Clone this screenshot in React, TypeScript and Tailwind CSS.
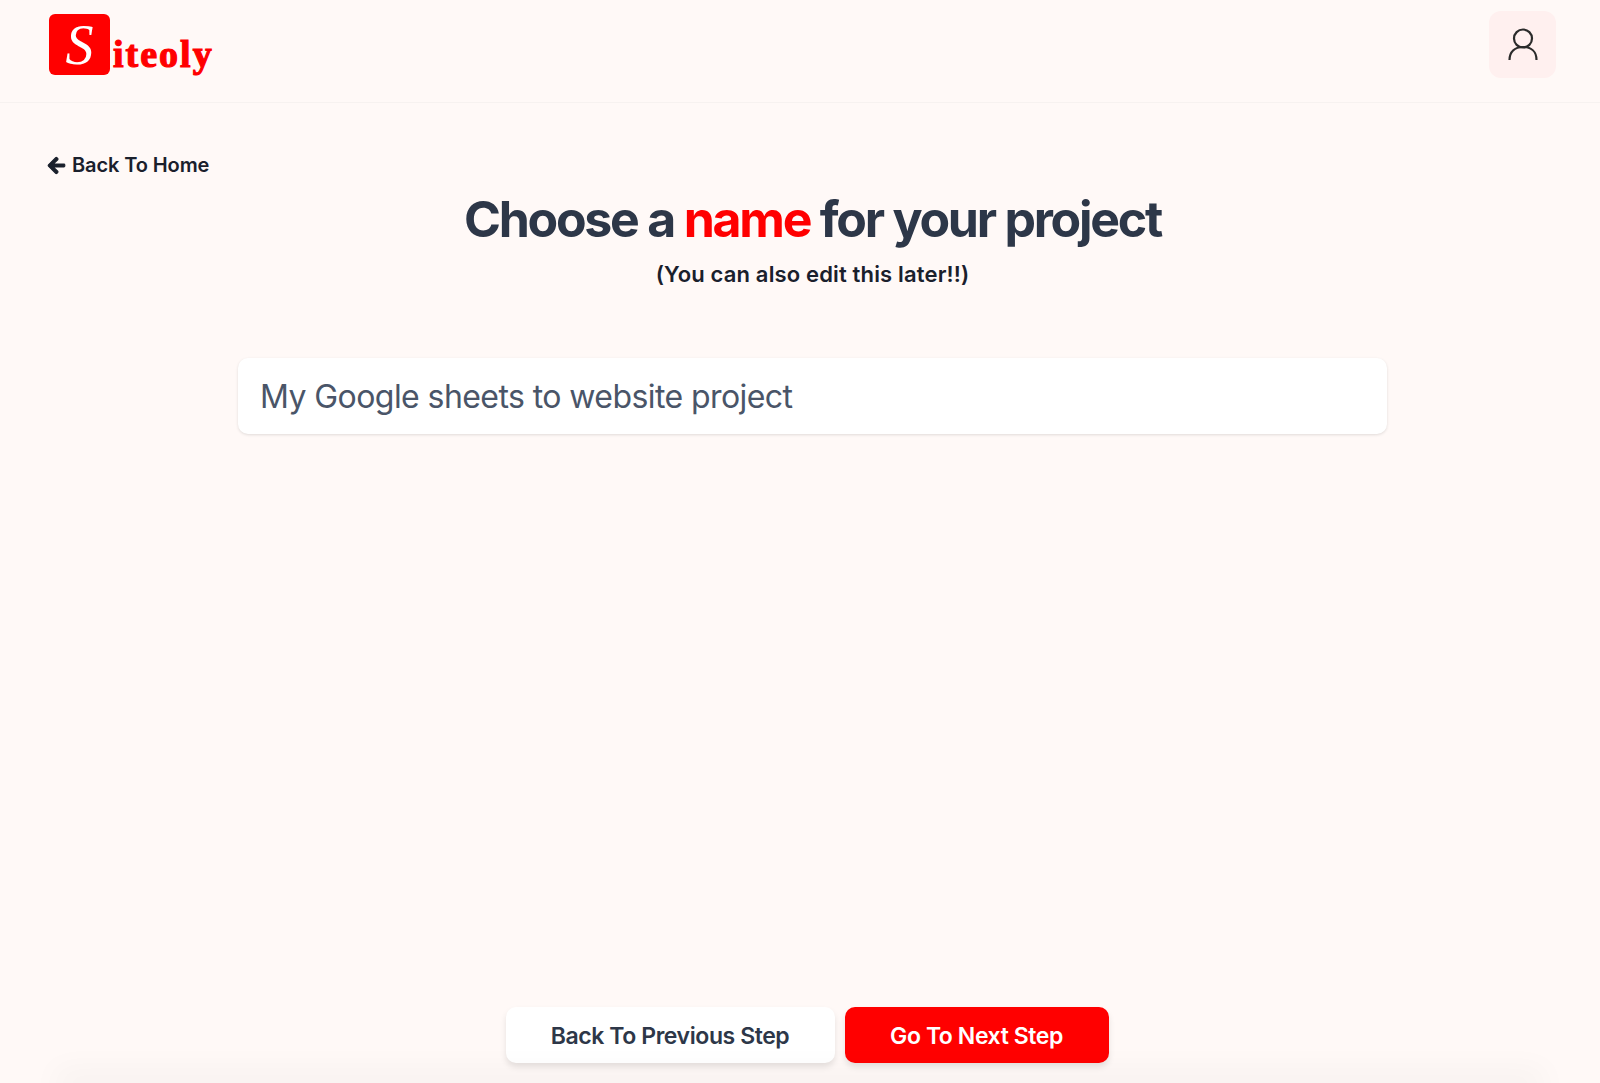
import React from 'react';
import { FaArrowLeft } from 'react-icons/fa';

const Logo = () => (
  <div className="flex items-end">
    <div className="flex h-[61px] w-[61px] items-center justify-center rounded-[6px] bg-[#ff0000] font-['Liberation_Serif',serif] text-[56px] italic leading-none text-white">
      S
    </div>
    <span className="mb-[2px] ml-[3px] font-['Liberation_Serif',serif] text-[38px] font-bold leading-none tracking-[2px] text-[#ff0000] [-webkit-text-stroke:1.2px_#ff0000]">
      iteoly
    </span>
  </div>
);

const UserIcon = () => (
  <svg width="30" height="33" viewBox="0 0 30 33" fill="none" stroke="#2b2b2b" strokeWidth="2.2">
    <circle cx="15" cy="10.5" r="9" />
    <path d="M1.500 32c0-8 5-13 13.500-13s13.500 5 13.500 13" />
  </svg>
);

export default function App() {
  return (
    <div className="flex h-[1083px] flex-col overflow-hidden bg-[#fff9f7] font-['Inter',sans-serif]">
      <header className="flex h-[103px] shrink-0 items-center justify-between border-b border-[#f7f2f0] pl-[49px] pr-[44px]">
        <div className="mb-[13px]">
          <Logo />
        </div>
        <button className="mb-[13px] flex h-[67px] w-[67px] items-center justify-center rounded-xl bg-[#fff0ef]">
          <UserIcon />
        </button>
      </header>

      <main className="flex flex-1 flex-col pl-[238px] pr-[213px]">
        <a className="-ml-[191px] mt-[50px] flex items-center gap-[6px] text-[20px] font-semibold leading-[24px] tracking-[-0.005em] text-[#1a202c]">
          <FaArrowLeft size={19} stroke="currentColor" strokeWidth={30} />
          Back To Home
        </a>
        <h1 className="mt-[12px] text-center text-[50px] font-bold leading-[60px] tracking-[-0.045em] text-[#2d3748]">
          Choose a <span className="text-[#ff0000]">name</span> for your project
        </h1>
        <p className="mt-[9px] text-center text-[22px] font-semibold leading-[32px] tracking-[0.007em] text-[#1a202c]">
          (You can also edit this later!!)
        </p>
        <input
          readOnly
          value="My Google sheets to website project"
          className="mt-[68px] h-[76px] w-full rounded-[10px] bg-white px-[22px] text-[32px] tracking-[-0.018em] text-[#4a5568] shadow-[0_1px_3px_rgba(0,0,0,0.12)] outline-none"
        />
      </main>

      <footer className="flex shrink-0 justify-center gap-[10px] pb-[20px] pl-[14px]">
        <button className="h-[56px] w-[329px] rounded-[10px] bg-white pt-[2px] text-[23px] font-semibold tracking-[-0.018em] text-[#2d3748] shadow-[0_4px_6px_rgba(0,0,0,0.1)]">
          Back To Previous Step
        </button>
        <button className="h-[56px] w-[264px] rounded-[10px] bg-[#ff0000] pt-[2px] text-[23px] font-semibold tracking-[-0.018em] text-white shadow-[0_4px_6px_rgba(0,0,0,0.1)]">
          Go To Next Step
        </button>
      </footer>
      <div className="mx-[70px] h-0 shrink-0 shadow-[0_0_30px_15px_rgba(0,0,0,0.03)]" />
    </div>
  );
}
